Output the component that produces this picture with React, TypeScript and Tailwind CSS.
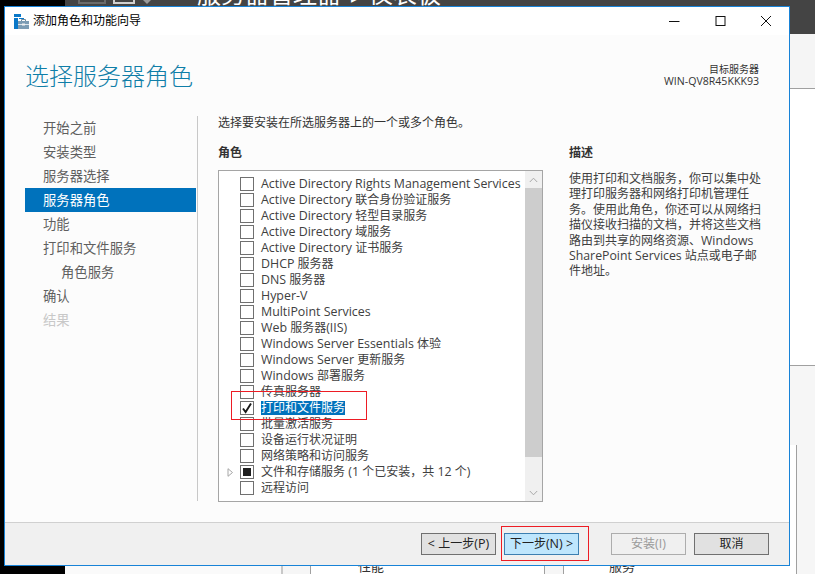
const roles = [
  'Active Directory Rights Management Services',
  'Active Directory 联合身份验证服务',
  'Active Directory 轻型目录服务',
  'Active Directory 域服务',
  'Active Directory 证书服务',
  'DHCP 服务器',
  'DNS 服务器',
  'Hyper-V',
  'MultiPoint Services',
  'Web 服务器(IIS)',
  'Windows Server Essentials 体验',
  'Windows Server 更新服务',
  'Windows 部署服务',
  '传真服务器',
  '打印和文件服务',
  '批量激活服务',
  '设备运行状况证明',
  '网络策略和访问服务',
  '文件和存储服务 (1 个已安装，共 12 个)',
  '远程访问',
];

const steps = [
  { label: '开始之前' },
  { label: '安装类型' },
  { label: '服务器选择' },
  { label: '服务器角色', active: true },
  { label: '功能' },
  { label: '打印和文件服务' },
  { label: '角色服务', sub: true },
  { label: '确认' },
  { label: '结果', disabled: true },
];

const description = [
  '使用打印和文档服务，你可以集中处',
  '理打印服务器和网络打印机管理任',
  '务。使用此角色，你还可以从网络扫',
  '描仪接收扫描的文档，并将这些文档',
  '路由到共享的网络资源、Windows',
  'SharePoint Services 站点或电子邮',
  '件地址。',
];

// Latin runs are set a bit larger than the CJK runs, the way the system font pairs them
const Mixed = ({ text, latin }: { text: string; latin: string }) => (
  <>
    {text.split(/([\u3000-\u9fff\uff00-\uffef]+)/).map((part, i) =>
      i % 2 ? <span key={i}>{part}</span> : <span key={i} className={latin}>{part}</span>,
    )}
  </>
);

const WizardIcon = () => (
  <svg width="15" height="15" viewBox="0 0 15 15">
    <rect x="0" y="0" width="7" height="3" fill="#0a78c8" />
    <rect x="0" y="4" width="4" height="11" fill="#0a78c8" />
    <rect x="5" y="4" width="5" height="1" fill="#0a78c8" />
    <path d="M7.5 7V5.5h4V7" fill="none" stroke="#6f8a9c" />
    <rect x="4" y="7" width="11" height="8" fill="#7d9db5" />
    <rect x="4" y="10" width="11" height="1" fill="#dfe8ee" />
    <rect x="8" y="9.5" width="3" height="2" fill="#f2f2f2" />
  </svg>
);

const Checkbox = ({ state }: { state?: 'checked' | 'mixed' }) => (
  <span className="w-[14px] h-[14px] shrink-0 border border-[#707070] bg-white flex items-center justify-center">
    {state === 'checked' && (
      <svg width="12" height="12" viewBox="0 0 12 12">
        <path d="M2 6.5 4.6 10 10 1.5" fill="none" stroke="#1a1a1a" strokeWidth="1.9" />
      </svg>
    )}
    {state === 'mixed' && <span className="w-[8px] h-[8px] bg-[#1f1f1f]" />}
  </span>
);

const Button = ({ label, kind }: { label: string; kind?: 'primary' | 'disabled' }) => (
  <button
    className={`w-[75px] h-[22px] border flex items-center justify-center text-[12px] whitespace-pre ${
      kind === 'primary'
        ? 'bg-[#bee6fd] border-[#3c7fb1] text-[#222]'
        : kind === 'disabled'
          ? 'bg-[#f0f0f0] border-[#adadad] text-[#9a9a9a]'
          : 'bg-[#e1e1e1] border-[#707070] text-[#222]'
    }`}
  >
    <Mixed text={label} latin="text-[12.5px]" />
  </button>
);

const Backdrop = () => (
  <div className="w-full h-full flex bg-black">
    <div className="w-[65px] shrink-0" />
    <div className="flex-1 flex flex-col">
      <div className="h-[34px] bg-[#444444] overflow-hidden relative">
        <div className="absolute left-[13px] top-[-1px] flex items-center gap-[7px]">
          <span className="w-[28px] h-[5px] border-x-2 border-b-2 border-[#6b6b6b]" />
          <span className="w-[22px] h-[5px] border-x-2 border-b-2 border-[#d0d0d0]" />
          <span className="w-0 h-0 border-x-[5px] border-x-transparent border-t-[5px] border-t-[#9a9a9a]" />
        </div>
        <div className="absolute left-[132px] top-[-22px] text-[24px] leading-[32px] text-white whitespace-nowrap">
          服务器管理器<span className="mx-[10px] text-[16px]">▸</span>仪表板
        </div>
      </div>
      <div className="h-[55px] bg-[#f5f5f5] border-b border-[#a0a0a0]" />
      <div className="h-[277px] bg-white border-b border-[#a0a0a0]" />
      <div className="flex-1 bg-[#f6f6f6] pt-[79px] flex gap-[27px]">
        <div className="w-[218px] bg-[#fafafa] border-r-2 border-[#c8c8c8]" />
        <div className="w-[235px] bg-white border-x border-[#a0a0a0] pl-[47px] pt-[114px] text-[13px] leading-[14px] text-[#333]">性能</div>
        <div className="w-[234px] -ml-[9px] bg-white border-x border-[#a0a0a0] pl-[45px] pt-[114px] text-[13px] leading-[14px] text-[#333]">服务</div>
        <div className="-ml-[9px] w-[2px] h-[50px] bg-[#c40000]" />
      </div>
    </div>
  </div>
);

const Wizard = () => (
  <div className="absolute left-[4px] top-[6px] w-[786px] h-[560px] border border-[#1883d7] bg-[#fcfcfc] flex flex-col">
    <div className="h-[28px] shrink-0 bg-white flex items-center pl-[9px] text-[12px] text-black">
      <WizardIcon />
      <span className="ml-[4px]">添加角色和功能向导</span>
      <div className="ml-auto flex">
        <span className="w-[46px] h-[28px] flex items-center justify-center">
          <svg width="11" height="11" viewBox="0 0 11 11"><path d="M0 5.5h10.5" stroke="#111" /></svg>
        </span>
        <span className="w-[46px] h-[28px] flex items-center justify-center">
          <svg width="11" height="11" viewBox="0 0 11 11"><rect x="1" y="0.5" width="9" height="9" fill="none" stroke="#111" /></svg>
        </span>
        <span className="w-[46px] h-[28px] flex items-center justify-center">
          <svg width="12" height="12" viewBox="0 0 12 12"><path d="M1 1l10 10M11 1 1 11" stroke="#111" fill="none" /></svg>
        </span>
      </div>
    </div>

    <div className="h-[81px] shrink-0 flex pl-[20px] pr-[30px]">
      <h1 className="mt-[25px] text-[24px] leading-[32px] font-light text-[#0f7ea8]">选择服务器角色</h1>
      <div className="ml-auto mt-[28px] text-right text-[#333]">
        <div className="text-[10px] leading-[12px]">目标服务器</div>
        <div className="text-[10.6px] leading-[12px]">WIN-QV8R45KKK93</div>
      </div>
    </div>

    <div className="h-[385px] shrink-0 flex">
      <nav className="ml-[20px] w-[172px] h-full">
        {steps.map((s) => (
          <div
            key={s.label}
            className={`h-[24px] w-[171px] pt-[2px] flex items-center text-[13.33px] ${s.sub ? 'pl-[36px]' : 'pl-[18px]'} ${
              s.active ? 'bg-[#0072bc] text-white' : s.disabled ? 'text-[#c8c8c8]' : 'text-[#5f5f5f]'
            }`}
          >
            {s.label}
          </div>
        ))}
      </nav>
      <div className="border-l border-[#c8c8c8] pl-[20px] flex-1 flex">
        <div className="w-[325px]">
          <p className="text-[12px] leading-[14px] text-[#333] whitespace-nowrap">选择要安装在所选服务器上的一个或多个角色。</p>
          <h2 className="mt-[15px] text-[12px] leading-[16px] font-bold text-[#333]">角色</h2>
          <div className="mt-[9px] h-[332px] border border-[#a5a5a5] bg-white flex">
            <ul className="flex-1 pt-[5px] min-w-0">
              {roles.map((r, i) => (
                <li key={r} className="h-[16px] flex items-center text-[12px] text-[#404040] whitespace-pre">
                  <span className="w-[21px] shrink-0 flex justify-center pl-[2px]">
                    {i === 18 && (
                      <svg width="7" height="9" viewBox="0 0 7 9"><path d="M1 .7 5.5 4.5 1 8.3z" fill="none" stroke="#a6a6a6" /></svg>
                    )}
                  </span>
                  <Checkbox state={i === 14 ? 'checked' : i === 18 ? 'mixed' : undefined} />
                  <span className={`ml-[7px] h-[14px] leading-[14px] ${i === 14 ? 'bg-[#0072bc] text-white' : ''}`}>
                    <Mixed text={r} latin="text-[12.4px]" />
                  </span>
                </li>
              ))}
            </ul>
            <div className="w-[17px] shrink-0 bg-[#f0f0f0] flex flex-col">
              <div className="h-[17px] flex items-center justify-center">
                <svg width="9" height="6" viewBox="0 0 9 6"><path d="M.8 5 4.5 1.2 8.2 5" fill="none" stroke="#a8a8a8" /></svg>
              </div>
              <div className="h-[269px] bg-[#cdcdcd]" />
              <div className="mt-auto h-[17px] flex items-center justify-center">
                <svg width="9" height="6" viewBox="0 0 9 6"><path d="M.8 1 4.5 4.8 8.2 1" fill="none" stroke="#a8a8a8" /></svg>
              </div>
            </div>
          </div>
        </div>
        <div className="ml-[26px] w-[205px]">
          <h2 className="mt-[29px] text-[12px] leading-[16px] font-bold text-[#333]">描述</h2>
          <div className="mt-[10px] text-[12px] leading-[15.4px] text-[#404040] whitespace-pre">
            {description.map((line) => (
              <div key={line}><Mixed text={line} latin="text-[12.3px]" /></div>
            ))}
          </div>
        </div>
      </div>
    </div>

    <div className="mt-auto h-[43px] border-t border-[#d0d0d0] bg-[#f0f0f0] flex items-center justify-end gap-[8px] pr-[20px]">
      <Button label="< 上一步(P)" />
      <Button label="下一步(N) >" kind="primary" />
      <span className="w-[16px]" />
      <Button label="安装(I)" kind="disabled" />
      <Button label="取消" />
    </div>
  </div>
);

export default function App() {
  return (
    <div className="relative w-[815px] h-[574px] overflow-hidden [font-family:'Open_Sans','Noto_Sans_CJK_SC',sans-serif]">
      <Backdrop />
      <Wizard />
      <div className="absolute left-[231px] top-[391px] w-[136px] h-[29px] border border-[#ed1c24]" />
      <div className="absolute left-[501px] top-[526px] w-[88px] h-[35px] border border-[#ed1c24]" />
    </div>
  );
}
